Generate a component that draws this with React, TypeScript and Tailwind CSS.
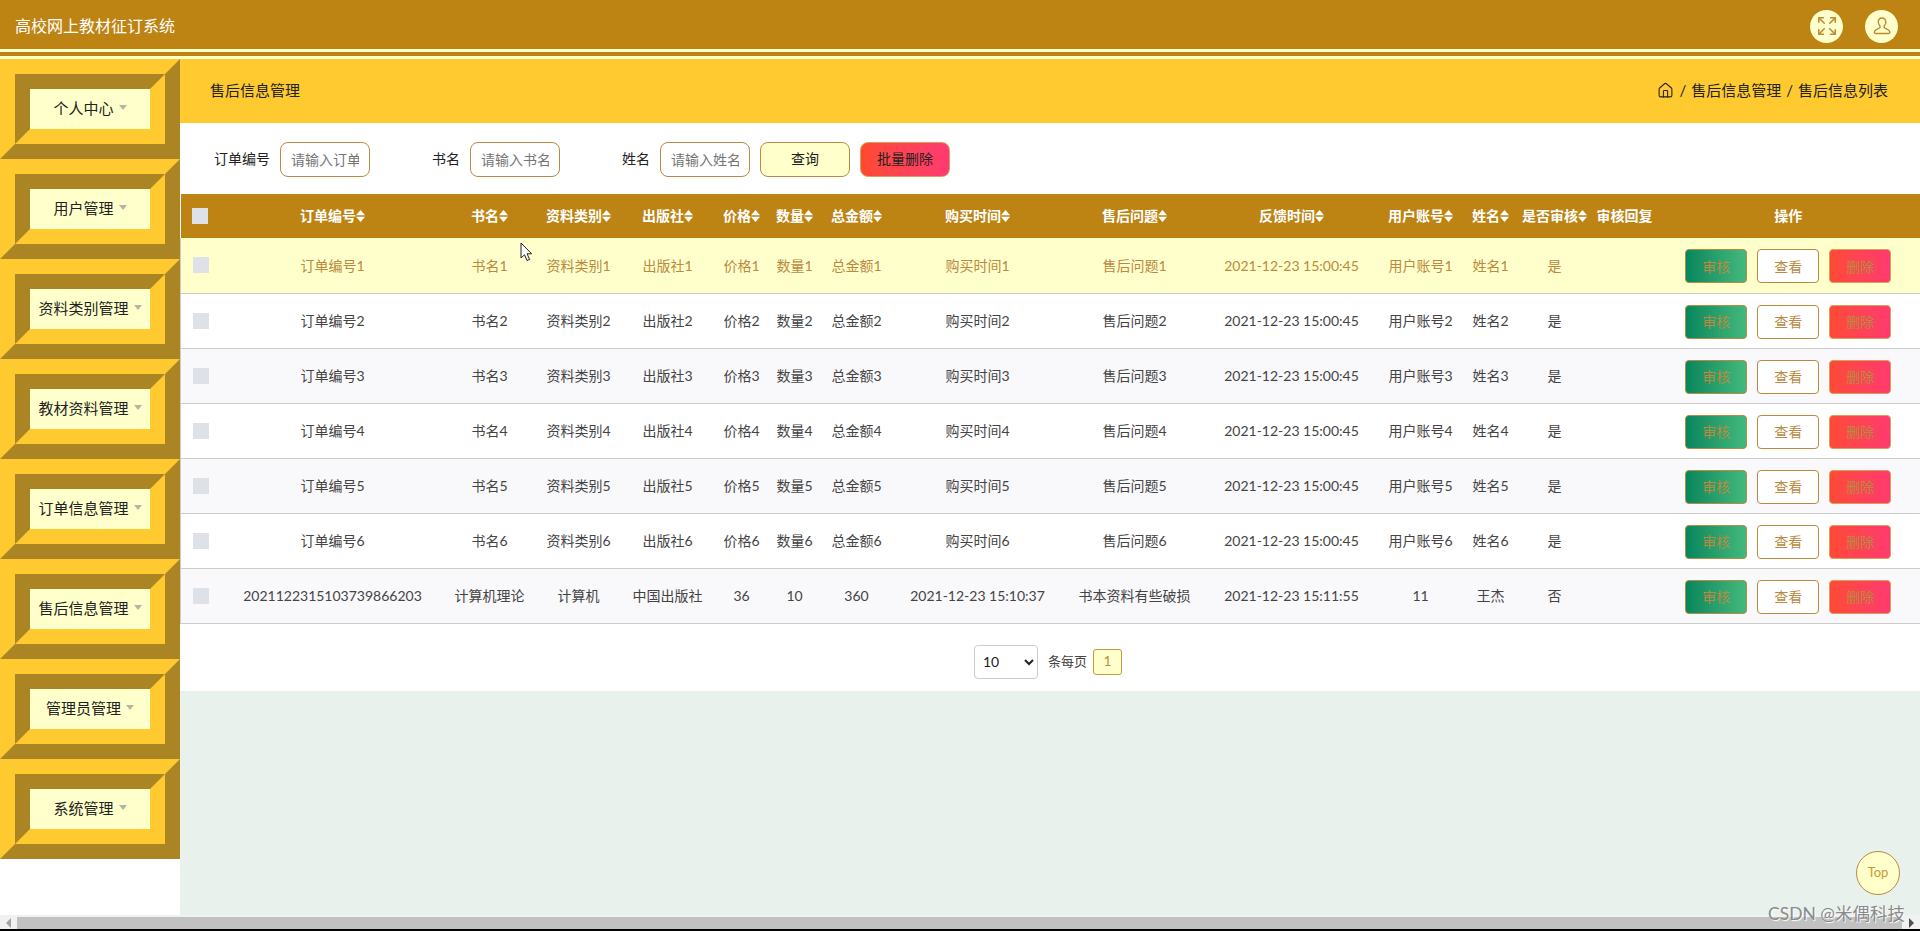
import { Expand, House } from "lucide-react";

const menus = ["个人中心", "用户管理", "资料类别管理", "教材资料管理", "订单信息管理", "售后信息管理", "管理员管理", "系统管理"];

type Column = { label: string; width: string; sortable?: boolean };

const columns: Column[] = [
  { label: "订单编号", width: "w-[220px]", sortable: true },
  { label: "书名", width: "w-[94px]", sortable: true },
  { label: "资料类别", width: "w-[84px]", sortable: true },
  { label: "出版社", width: "w-[94px]", sortable: true },
  { label: "价格", width: "w-[54px]", sortable: true },
  { label: "数量", width: "w-[52px]", sortable: true },
  { label: "总金额", width: "w-[72px]", sortable: true },
  { label: "购买时间", width: "w-[170px]", sortable: true },
  { label: "售后问题", width: "w-[144px]", sortable: true },
  { label: "反馈时间", width: "w-[170px]", sortable: true },
  { label: "用户账号", width: "w-[88px]", sortable: true },
  { label: "姓名", width: "w-[52px]", sortable: true },
  { label: "是否审核", width: "w-[76px]", sortable: true },
  { label: "审核回复", width: "w-[64px]" },
];

const sampleRow = (n: number) => [
  `订单编号${n}`,
  `书名${n}`,
  `资料类别${n}`,
  `出版社${n}`,
  `价格${n}`,
  `数量${n}`,
  `总金额${n}`,
  `购买时间${n}`,
  `售后问题${n}`,
  "2021-12-23 15:00:45",
  `用户账号${n}`,
  `姓名${n}`,
  "是",
  "",
];

const rows = [
  ...[1, 2, 3, 4, 5, 6].map(sampleRow),
  [
    "2021122315103739866203",
    "计算机理论",
    "计算机",
    "中国出版社",
    "36",
    "10",
    "360",
    "2021-12-23 15:10:37",
    "书本资料有些破损",
    "2021-12-23 15:11:55",
    "11",
    "王杰",
    "否",
    "",
  ],
];

function SortIcon() {
  return (
    <svg width="9" height="12" viewBox="0 0 9 12" className="inline-block fill-white align-[-1px]">
      <path d="M4.500 0 9 5.300H0z" />
      <path d="M4.500 12 9 6.700H0z" />
    </svg>
  );
}

function MenuItem({ label }: { label: string }) {
  return (
    <div className="h-[100px] w-[180px] border-[15px] border-t-[#ffca2f] border-l-[#ffca2f] border-r-[#ab8524] border-b-[#ab8524]">
      <div className="h-[70px] w-[150px] border-[15px] border-t-[#ab8524] border-l-[#ab8524] border-r-[#ffca2f] border-b-[#ffca2f]">
        <div className="flex h-[40px] w-[120px] items-center justify-center gap-[5px] bg-[#ffffcc] pb-[2px] text-[15px] text-[#222]">
          {label}
          <span className="mt-[-1px] h-0 w-0 border-x-[4px] border-t-[5px] border-x-transparent border-t-[#b5b5a5]" />
        </div>
      </div>
    </div>
  );
}

function SearchField({ label, placeholder }: { label: string; placeholder: string }) {
  return (
    <div className="flex w-[190px] items-center gap-[10px]">
      <label className="w-[90px] pb-[2px] text-right text-[14px] text-[#222]">{label}</label>
      <input
        placeholder={placeholder}
        className="h-[35px] w-[90px] rounded-[8px] border border-[#b98a3f] bg-white px-[10px] text-[14px] placeholder:text-[#757575]"
      />
    </div>
  );
}

export default function App() {
  return (
    <div className="relative flex h-[931px] w-[1920px] flex-col overflow-hidden bg-white font-['Lato','Noto_Sans_CJK_SC',sans-serif]">
      <header className="flex h-[49px] shrink-0 items-center justify-between bg-[#bd8414] pl-[15px] pr-[22px] pt-[3px]">
        <h1 className="text-[16px] font-normal text-white">高校网上教材征订系统</h1>
        <div className="flex gap-[22px]">
          <button className="flex h-[33px] w-[33px] items-center justify-center rounded-full bg-[#ffffcc] text-[#bc8a30]">
            <Expand size={22} strokeWidth={1.7} />
          </button>
          <button className="flex h-[33px] w-[33px] items-center justify-center rounded-full bg-[#ffffcc] text-[#bc8a30]">
            <svg width="20" height="20" viewBox="0 0 20 20" fill="none" stroke="currentColor" strokeWidth="1.4">
              <path d="M10 2c-2.400 0-3.700 1.800-3.700 4.100 0 1.700.8 3.100 1.700 4v1.600c-.6.9-5.200 1.700-5.600 4.100-.1.9.3 1.700 1.200 1.700h13c.9 0 1.300-.8 1.200-1.700-.4-2.400-5-3.200-5.600-4.100v-1.600c.9-.9 1.700-2.300 1.700-4C13.700 3.800 12.400 2 10 2z" />
            </svg>
          </button>
        </div>
      </header>
      <div className="h-[3px] shrink-0 bg-[#ffffcc]" />
      <div className="h-[4px] shrink-0 bg-[#bd8414]" />
      <div className="h-[3px] shrink-0 bg-[#ffffcc]" />

      <div className="flex min-h-0 flex-1">
        <aside className="w-[180px] shrink-0 bg-white">
          {menus.map((menu) => (
            <MenuItem key={menu} label={menu} />
          ))}
        </aside>

        <main className="flex min-w-0 flex-1 flex-col bg-[#e8f1ec]">
          <div className="flex h-[64px] shrink-0 items-center justify-between bg-[#ffca2f] pb-[2px] pl-[30px] pr-[32px] text-[15px] text-[#222]">
            <span>售后信息管理</span>
            <div className="flex items-center gap-[5px]">
              <House size={17} strokeWidth={1.5} className="text-[#222]" />
              <span>/</span>
              <span>售后信息管理</span>
              <span>/</span>
              <span>售后信息列表</span>
            </div>
          </div>

          <div className="flex h-[71px] shrink-0 items-center bg-white pt-[1px]">
            <SearchField label="订单编号" placeholder="请输入订单编号" />
            <SearchField label="书名" placeholder="请输入书名" />
            <SearchField label="姓名" placeholder="请输入姓名" />
            <button className="ml-[10px] h-[35px] w-[90px] rounded-[8px] border border-[#b98a3f] bg-[#ffffcc] pb-[2px] text-[14px] text-[#222]">
              查询
            </button>
            <button className="ml-[10px] h-[35px] w-[90px] rounded-[8px] border border-[#d9a05a] bg-gradient-to-r from-[#ff4a2e] to-[#ff3a70] pb-[2px] text-[14px] text-[#222]">
              批量删除
            </button>
          </div>

          <table className="w-[1740px] shrink-0 table-fixed border-collapse bg-white text-[14px] text-[#444]">
            <thead>
              <tr className="h-[44px] bg-[#bd8414] text-white">
                <th className="w-[42px] pl-[11px] text-left">
                  <span className="block h-[16px] w-[16px] bg-[#dfe1e8]" />
                </th>
                {columns.map((col) => (
                  <th key={col.label} className={`${col.width} whitespace-nowrap pb-[2px] font-bold`}>
                    {col.label}
                    {col.sortable && <SortIcon />}
                  </th>
                ))}
                <th className="pb-[2px] font-bold">操作</th>
              </tr>
            </thead>
            <tbody>
              {rows.map((row, i) => (
                <tr
                  key={i}
                  className={`h-[55px] border-b border-l border-[#cccccc] ${
                    i === 0 ? "bg-[#ffffcc] text-[#b98a3f]" : i % 2 === 1 ? "bg-white" : "bg-[#f9f8fb]"
                  }`}
                >
                  <td className="pl-[12px]">
                    <span className="block h-[16px] w-[16px] bg-[#dfe1e8]" />
                  </td>
                  {row.map((cell, j) => (
                    <td key={j} className="whitespace-nowrap text-center">
                      {cell}
                    </td>
                  ))}
                  <td>
                    <div className="flex items-center justify-center gap-[10px] pt-[2px] text-[#b98a3f]">
                      <button className="h-[34px] w-[62px] rounded-[4px] border border-[#b98a3f] bg-gradient-to-r from-[#03865d] to-[#42b97c]">
                        审核
                      </button>
                      <button className="h-[34px] w-[62px] rounded-[4px] border border-[#b98a3f] bg-white">查看</button>
                      <button className="h-[34px] w-[62px] rounded-[4px] border border-[#d9a05a] bg-gradient-to-r from-[#ff4a33] to-[#ff3a6e]">
                        删除
                      </button>
                    </div>
                  </td>
                </tr>
              ))}
            </tbody>
          </table>

          <div className="flex h-[67px] shrink-0 items-center justify-center gap-[10px] bg-white pr-[4px] pt-[9px] text-[13px] text-[#444]">
            <select className="h-[34px] w-[64px] rounded-[4px] border border-[#cccccc] bg-white pl-[4px] text-[14px] text-[#222]">
              <option>10</option>
            </select>
            <span>条每页</span>
            <span className="ml-[-4px] flex h-[26px] w-[29px] items-center justify-center rounded-[3px] border border-[#c79a3c] bg-[#ffffcc] text-[#b98a3f]">
              1
            </span>
          </div>
        </main>
      </div>

      <div className="flex h-[14px] shrink-0 items-end bg-[#f1f1f1]">
        <span className="flex h-[12px] w-[17px] items-center justify-center">
          <span className="h-0 w-0 border-y-[5px] border-r-[5px] border-y-transparent border-r-[#a3a3a3]" />
        </span>
        <div className="h-[12px] flex-1 bg-[#c1c1c1]" />
        <span className="flex h-[12px] w-[18px] items-center justify-center">
          <span className="h-0 w-0 border-y-[5px] border-l-[5px] border-y-transparent border-l-[#505050]" />
        </span>
      </div>
      <div className="h-[2px] shrink-0 bg-black" />

      <button className="absolute left-[1856px] top-[851px] flex h-[44px] w-[44px] items-center justify-center rounded-full border border-[#b98a3f] bg-[#ffffcc] text-[13px] text-[#c99a2e]">
        Top
      </button>

      <span className="absolute left-[1768px] top-[901px] whitespace-nowrap text-[17.500px] text-[#8a8a8a] [text-shadow:1px_1px_1px_#fff]">
        CSDN @米偶科技
      </span>

      <svg className="absolute left-[520px] top-[242px]" width="13" height="20" viewBox="0 0 13 20">
        <path d="M1 1v15l3.500-3.200 2.500 5.700 2.600-1.100-2.500-5.600h4.600z" fill="#fff" stroke="#222" strokeWidth="1" />
      </svg>
    </div>
  );
}
